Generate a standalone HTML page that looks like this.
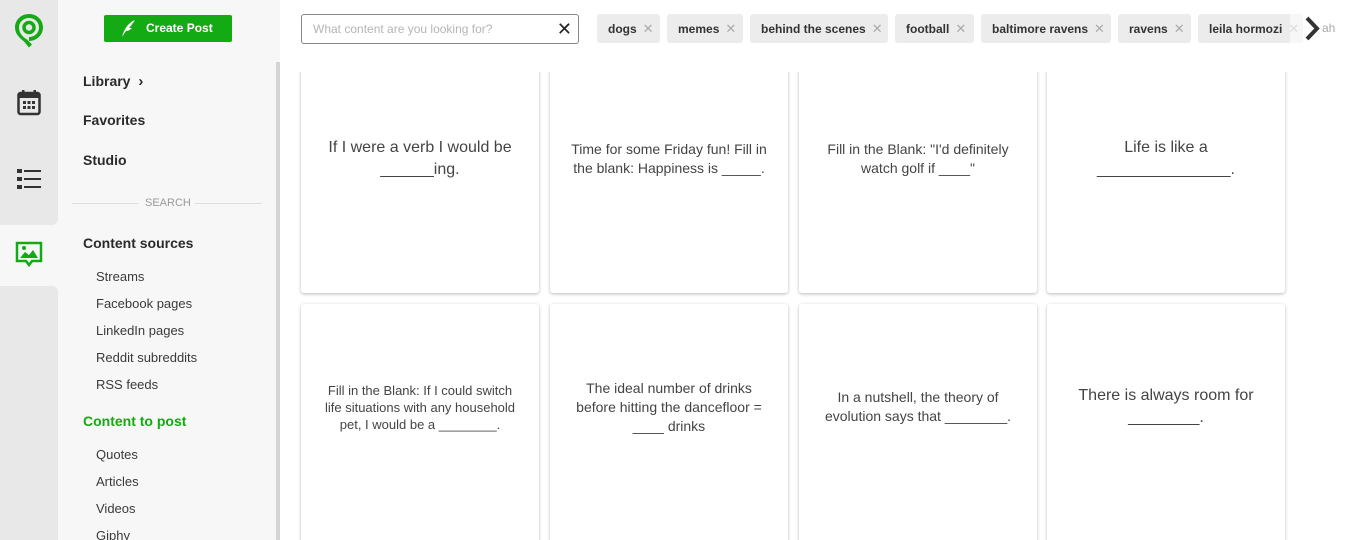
<!DOCTYPE html>
<html><head><meta charset="utf-8"><style>
*{margin:0;padding:0;box-sizing:border-box}
html,body{width:1347px;height:540px;overflow:hidden}
body{background:#fff;font-family:"Liberation Sans",sans-serif;position:relative}
.rail{position:absolute;left:0;top:0;width:58px;height:540px;background:#f7f7f7}
.r1{position:absolute;left:0;top:0;width:58px;height:225px;background:#e8e8e8;border-bottom-right-radius:6px}
.r2{position:absolute;left:0;top:286px;width:58px;height:254px;background:#e8e8e8;border-top-right-radius:6px}
.side{position:absolute;left:58px;top:0;width:222px;height:540px;background:#f7f7f7}
.scroll{position:absolute;left:276px;top:62px;width:4px;height:478px;background:#d4d4d4}
.btn{position:absolute;left:104px;top:15px;width:128px;height:27px;background:#13aa13;border-radius:2px;color:#fff;font-weight:bold;font-size:12px;line-height:27px;padding-left:42px}
.h{position:absolute;left:83px;font-weight:bold;font-size:14px;color:#2a2a2a}
.s{position:absolute;left:96px;font-size:13px;color:#3a3a3a}
.hdr{position:absolute;left:280px;top:0;width:1067px;height:72px;background:#fff;z-index:2}
.search{position:absolute;left:301px;top:14px;width:278px;height:30px;border:1px solid #888;border-radius:3px;font-size:12px;color:#b5b5b5;line-height:28px;padding-left:11px;z-index:3}
.search b{position:absolute;right:6px;top:0;color:#222;font-size:18px;font-weight:normal}
.tag{position:absolute;top:14px;height:29px;background:#ececec;border-radius:3px;font-size:12px;font-weight:bold;color:#333;line-height:29px;padding-left:11px;white-space:nowrap;z-index:3}
.tag i{font-style:normal;color:#aaa;font-weight:normal;margin-left:6px;font-size:13px}
.card{position:absolute;width:238px;background:#fff;border-radius:3px;box-shadow:0 1px 3px rgba(0,0,0,.28);display:flex;align-items:center;justify-content:center;text-align:center;color:#444;padding:0 18px}
.z{z-index:3}
</style></head><body>
<div class="rail"><div class="r1"></div><div class="r2"></div></div>
<svg style="position:absolute;left:14px;top:13px" width="30" height="36" viewBox="0 0 30 36"><path d="M15 1C7 1 1 7 1 14.5c0 6 4 10 9 14l5 6 3-3-5-5c-5-3-8-7-8-12C5 9 9.5 5 15 5s10 4 10 9.5c0 5.5-4.5 9.5-10 9.5v4c7.5 0 14-6 14-13.5C29 7 23 1 15 1z" fill="#13aa13"/><circle cx="15" cy="14.5" r="5" fill="none" stroke="#13aa13" stroke-width="3.5"/></svg>
<svg style="position:absolute;left:17px;top:89px" width="24" height="27" viewBox="0 0 24 27"><rect x="1.5" y="4" width="21" height="21" rx="2" fill="none" stroke="#333" stroke-width="2.5"/><rect x="1.5" y="4" width="21" height="5" fill="#333"/><rect x="5" y="1" width="2.5" height="5" fill="#333"/><rect x="16.5" y="1" width="2.5" height="5" fill="#333"/><g fill="#333"><rect x="6" y="12" width="3" height="3"/><rect x="10.5" y="12" width="3" height="3"/><rect x="15" y="12" width="3" height="3"/><rect x="6" y="17" width="3" height="3"/><rect x="10.5" y="17" width="3" height="3"/><rect x="15" y="17" width="3" height="3"/></g></svg>
<svg style="position:absolute;left:17px;top:169px" width="24" height="20" viewBox="0 0 24 20"><g fill="#333"><rect x="0" y="0" width="5" height="4"/><rect x="7" y="1" width="17" height="2"/><rect x="0" y="8" width="5" height="4"/><rect x="7" y="9" width="17" height="2"/><rect x="0" y="16" width="5" height="4"/><rect x="7" y="17" width="17" height="2"/></g></svg>
<svg style="position:absolute;left:15px;top:241px" width="28" height="27" viewBox="0 0 28 27"><path d="M2 2h24v18H17l-3 4-3-4H2z" fill="none" stroke="#13aa13" stroke-width="2.5"/><path d="M5 17l5-6 4 3 4-5 5 8z" fill="#13aa13"/><circle cx="9" cy="7" r="2" fill="#13aa13"/></svg>
<div class="side"></div><div class="scroll"></div>
<div class="btn">Create Post</div>
<svg style="position:absolute;left:120px;top:19px" width="16" height="19" viewBox="0 0 16 19"><path d="M2 18C4 10 8 4 15 1c-2 3-4 6-6 8h3c-2 2-4 3-6 3 0 0-2 3-4 6z" fill="#fff"/></svg>
<div class="h" style="top:73px">Library <span style="font-size:15px;margin-left:4px">&#x203A;</span></div>
<div class="h" style="top:112px">Favorites</div>
<div class="h" style="top:152px">Studio</div>
<div style="position:absolute;left:72px;top:203px;width:66px;height:1px;background:#ddd"></div>
<div style="position:absolute;left:145px;top:197px;font-size:11px;color:#999">SEARCH</div>
<div style="position:absolute;left:195px;top:203px;width:67px;height:1px;background:#ddd"></div>
<div class="h" style="top:235px">Content sources</div>
<div class="s" style="top:269px">Streams</div>
<div class="s" style="top:296px">Facebook pages</div>
<div class="s" style="top:323px">LinkedIn pages</div>
<div class="s" style="top:350px">Reddit subreddits</div>
<div class="s" style="top:377px">RSS feeds</div>
<div class="h" style="top:413px;color:#13aa13">Content to post</div>
<div class="s" style="top:447px">Quotes</div>
<div class="s" style="top:474px">Articles</div>
<div class="s" style="top:501px">Videos</div>
<div class="s" style="top:528px">Giphy</div>
<div class="card" style="left:301px;top:25px;height:268px;font-size:16px;line-height:22px">If I were a verb I would be ______ing.</div>
<div class="card" style="left:550px;top:25px;height:268px;font-size:14px;line-height:19px">Time for some Friday fun! Fill in the blank: Happiness is _____.</div>
<div class="card" style="left:799px;top:25px;height:268px;font-size:14px;line-height:19px">Fill in the Blank: "I'd definitely watch golf if ____"</div>
<div class="card" style="left:1047px;top:25px;height:268px;font-size:16px;line-height:22px">Life is like a _______________.</div>
<div class="card" style="left:301px;top:304px;height:250px;font-size:13px;line-height:17px;padding-bottom:44px">Fill in the Blank: If I could switch life situations with any household pet, I would be a ________.</div>
<div class="card" style="left:550px;top:304px;height:250px;font-size:14px;line-height:19px;padding-bottom:44px">The ideal number of drinks before hitting the dancefloor = ____ drinks</div>
<div class="card" style="left:799px;top:304px;height:250px;font-size:14px;line-height:19px;padding-bottom:44px">In a nutshell, the theory of evolution says that ________.</div>
<div class="card" style="left:1047px;top:304px;height:250px;font-size:16px;line-height:22px;padding-bottom:44px">There is always room for ________.</div>
<div class="hdr"></div>
<div class="search">What content are you looking for?<b>&#x2715;</b></div>
<div class="tag" style="left:597px;width:63px">dogs<i>&#x2715;</i></div>
<div class="tag" style="left:667px;width:76px">memes<i>&#x2715;</i></div>
<div class="tag" style="left:750px;width:138px">behind the scenes<i>&#x2715;</i></div>
<div class="tag" style="left:895px;width:79px">football<i>&#x2715;</i></div>
<div class="tag" style="left:981px;width:130px">baltimore ravens<i>&#x2715;</i></div>
<div class="tag" style="left:1118px;width:73px">ravens<i>&#x2715;</i></div>
<div class="tag" style="left:1198px;width:105px">leila hormozi<i>&#x2715;</i></div>
<div class="z" style="position:absolute;left:1290px;top:14px;width:44px;height:29px;background:rgba(255,255,255,.6)"></div>
<div class="z" style="position:absolute;left:1322px;top:21px;font-size:12px;color:#aaa">ah</div>
<svg class="z" style="position:absolute;left:1304px;top:15px" width="16" height="27" viewBox="0 0 16 27"><path d="M3 3l10 10.5L3 24" fill="none" stroke="#333" stroke-width="4"/></svg>
</body></html>
